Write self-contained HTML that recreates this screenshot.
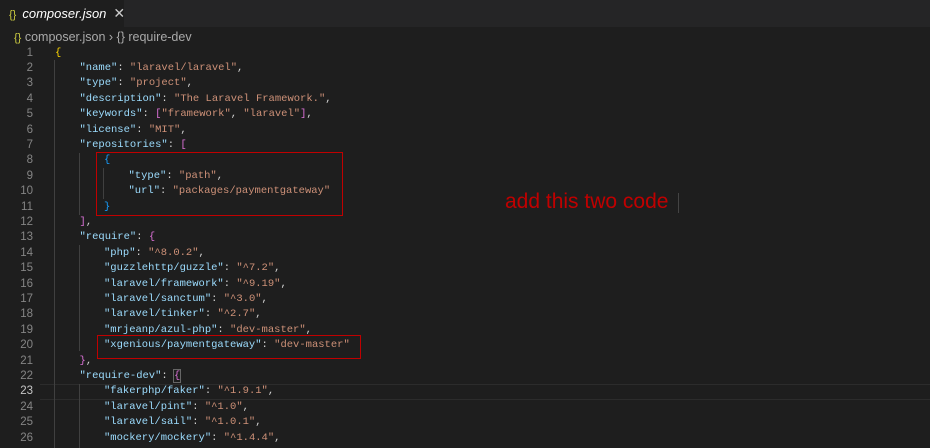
<!DOCTYPE html>
<html><head><meta charset="utf-8"><style>
*{margin:0;padding:0;box-sizing:border-box}
body{width:930px;height:448px;background:#1e1e1e;overflow:hidden;position:relative;font-family:"Liberation Sans",sans-serif}
.tabbar{position:absolute;left:0;top:0;width:930px;height:27px;background:#252526}
.tab{position:absolute;left:0;top:0;width:124px;height:27px;background:#1e1e1e;color:#fff;font-size:13px;font-style:italic;line-height:27px;padding-left:9px}
.tab .b{color:#cbcb41;font-style:normal;font-size:11px;margin-right:6px}
.tab .x{font-style:normal;color:#ccc;margin-left:7px;font-size:14px}
.crumb{position:absolute;left:14px;top:29px;color:#a9a9a9;font-size:12.5px;line-height:16px}
.crumb .b{color:#cbcb41;font-size:11px}
.ln{position:absolute;left:0;width:33px;text-align:right;color:#858585;font-family:"Liberation Sans",sans-serif;font-size:11.5px;line-height:15.4px}
.code{position:absolute;white-space:pre;font-family:"Liberation Mono",monospace;font-size:10.5px;line-height:15.4px;color:#d4d4d4}
.k{color:#9cdcfe}.s{color:#ce9178}.g{color:#ffd700}.p{color:#da70d6}.bl{color:#179fff}
.guide{position:absolute;width:1px;background:#404040}
.box{position:absolute;border:1.5px solid #c00000}
</style></head><body>
<div class="tabbar"><div class="tab"><span class="b">{}</span>composer.json<span class="x">✕</span></div></div>
<div class="crumb"><span class="b">{}</span> composer.json &#8250; {} require-dev</div>
<div style="position:absolute;left:40px;top:384px;width:890px;height:16px;border-top:1px solid #2c2c2c;border-bottom:1px solid #2c2c2c"></div>
<div class="guide" style="left:54px;top:60px;height:388px"></div>
<div class="guide" style="left:79px;top:153px;height:62px"></div>
<div class="guide" style="left:103px;top:168px;height:31px"></div>
<div class="guide" style="left:79px;top:245px;height:106px"></div>
<div class="guide" style="left:79px;top:384px;height:64px"></div>
<div id="l"></div>
<div class="box" style="left:96px;top:152px;width:247px;height:64px"></div>
<div class="box" style="left:97px;top:335px;width:264px;height:24px"></div>
<div style="position:absolute;left:505px;top:188px;color:#c00000;font-size:21px;line-height:28px">add this two code</div>
<div style="position:absolute;left:678px;top:193px;width:1px;height:20px;background:#444"></div>
<script>
var L=[
[0,'<span class="g">{</span>'],
[1,'<span class="k">"name"</span>: <span class="s">"laravel/laravel"</span>,'],
[1,'<span class="k">"type"</span>: <span class="s">"project"</span>,'],
[1,'<span class="k">"description"</span>: <span class="s">"The Laravel Framework."</span>,'],
[1,'<span class="k">"keywords"</span>: <span class="p">[</span><span class="s">"framework"</span>, <span class="s">"laravel"</span><span class="p">]</span>,'],
[1,'<span class="k">"license"</span>: <span class="s">"MIT"</span>,'],
[1,'<span class="k">"repositories"</span>: <span class="p">[</span>'],
[2,'<span class="bl">{</span>'],
[3,'<span class="k">"type"</span>: <span class="s">"path"</span>,'],
[3,'<span class="k">"url"</span>: <span class="s">"packages/paymentgateway"</span>'],
[2,'<span class="bl">}</span>'],
[1,'<span class="p">]</span>,'],
[1,'<span class="k">"require"</span>: <span class="p">{</span>'],
[2,'<span class="k">"php"</span>: <span class="s">"^8.0.2"</span>,'],
[2,'<span class="k">"guzzlehttp/guzzle"</span>: <span class="s">"^7.2"</span>,'],
[2,'<span class="k">"laravel/framework"</span>: <span class="s">"^9.19"</span>,'],
[2,'<span class="k">"laravel/sanctum"</span>: <span class="s">"^3.0"</span>,'],
[2,'<span class="k">"laravel/tinker"</span>: <span class="s">"^2.7"</span>,'],
[2,'<span class="k">"mrjeanp/azul-php"</span>: <span class="s">"dev-master"</span>,'],
[2,'<span class="k">"xgenious/paymentgateway"</span>: <span class="s">"dev-master"</span>'],
[1,'<span class="p">}</span>,'],
[1,'<span class="k">"require-dev"</span>: <span class="p" style="outline:1px solid #666">{</span>'],
[2,'<span class="k">"fakerphp/faker"</span>: <span class="s">"^1.9.1"</span>,'],
[2,'<span class="k">"laravel/pint"</span>: <span class="s">"^1.0"</span>,'],
[2,'<span class="k">"laravel/sail"</span>: <span class="s">"^1.0.1"</span>,'],
[2,'<span class="k">"mockery/mockery"</span>: <span class="s">"^1.4.4"</span>,']
];
var h='';
L.forEach(function(a,i){var t=45.5+i*15.4;
h+='<div class="ln" style="top:'+t+'px;'+(i==22?'color:#c6c6c6':'')+'">'+(i+1)+'</div>';
h+='<div class="code" style="top:'+t+'px;left:'+(55+a[0]*24.5)+'px">'+a[1]+'</div>';});
document.getElementById('l').innerHTML=h;
</script>
</body></html>
